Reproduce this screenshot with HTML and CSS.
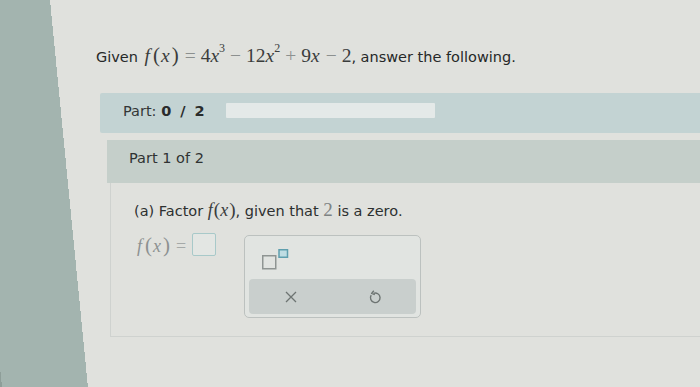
FILE: index.html
```html
<!DOCTYPE html>
<html lang="en">
<head>
<meta charset="utf-8">
<title>Factor f(x)</title>
<link rel="stylesheet" href="styles.css">
</head>
<body>
<main class="page">
  <p class="question">Given <span class="math"><i>f</i><span class="paren">(</span><i>x</i><span class="paren">)</span><span class="op">=</span>4<i>x</i><sup>3</sup><span class="op">−</span>12<i>x</i><sup>2</sup><span class="op">+</span>9<i>x</i><span class="op">−</span>2</span>, answer the following.</p>

  <div class="part-bar">
    <span class="part-label">Part: <b>0 <span class="slash">/</span> 2</b></span>
    <div class="progress"></div>
  </div>

  <section class="part">
    <div class="part-head">Part 1 of 2</div>
    <div class="part-body">
      <p class="prompt">(a) Factor <span class="math small"><i>f</i><span class="paren">(</span><i>x</i><span class="paren">)</span></span>, given that <span class="num">2</span> is a zero.</p>
      <div class="answer-row">
        <span class="math answer-lhs"><i>f</i><span class="paren">(</span><i>x</i><span class="paren">)</span><span class="op">=</span></span>
        <span class="answer-box"></span>
        <div class="keypad">
          <div class="keypad-top">
            <svg class="sup-icon" width="27" height="21" viewBox="0 0 27 21">
              <rect x="0.75" y="6.75" width="13" height="13" fill="none" stroke="#8f9593" stroke-width="1.5"/>
              <rect x="17" y="0.75" width="8.5" height="7.5" fill="#bfdde3" stroke="#5f9fae" stroke-width="1.5"/>
            </svg>
          </div>
          <div class="keypad-buttons">
            <button class="key" aria-label="clear">
              <svg width="12" height="12" viewBox="0 0 12 12"><path d="M1 1 L11 11 M11 1 L1 11" stroke="#6d7472" stroke-width="1.3" fill="none"/></svg>
            </button>
            <button class="key" aria-label="undo">
              <svg width="13" height="14" viewBox="0 0 13 14"><path d="M3.2 5.2 A4.8 4.8 0 1 0 5.5 3.3" stroke="#6d7472" stroke-width="1.4" fill="none"/><path d="M5.8 0.8 L3.6 3.4 L6.8 4.6" stroke="#6d7472" stroke-width="1.4" fill="none" stroke-linejoin="round"/></svg>
            </button>
          </div>
        </div>
      </div>
    </div>
  </section>
</main>
</body>
</html>
```

FILE: styles.css
```css
html, body {
  margin: 0;
  padding: 0;
}

body {
  width: 700px;
  height: 387px;
  overflow: hidden;
  font-family: "DejaVu Sans", Verdana, sans-serif;
  font-size: 14.5px;
  color: #2a2c2c;
  background:
    linear-gradient(84.4deg, #8e9e99 0 2px, transparent 2px),
    linear-gradient(84.4deg, #a3b4af 0 87.5px, #e0e1dd 87.5px);
}

.page {
  padding-left: 96px;
  padding-top: 43px;
}

.question {
  margin: 0;
  line-height: 24px;
  color: #262828;
}

.math {
  font-family: "Liberation Serif", "Times New Roman", serif;
  font-size: 19.5px;
  color: #3a3c3c;
}

.math i {
  font-style: italic;
  margin-right: 1px;
}

.math i:first-child {
  margin-left: 2px;
  margin-right: 2px;
}

.math .paren {
  font-size: 21px;
  margin: 0 1px;
}

.math sup {
  font-size: 12px;
  vertical-align: 10px;
  line-height: 0;
  margin-left: -1px;
}

.math .op {
  color: #8c908f;
  margin: 0 5px;
}

.math.small {
  font-size: 18px;
}

.math.small i:first-child {
  margin-left: 0;
  margin-right: 1px;
}

.math.small .paren {
  font-size: 19px;
  margin: 0;
}

.part-bar {
  margin: 24px 0 0 4px;
  height: 40px;
  box-sizing: border-box;
  padding: 0 0 5px 23px;
  background: #c3d3d3;
  display: flex;
  align-items: center;
  border-radius: 2px 0 0 2px;
}

.part-label {
  color: #333636;
}

.part-label b {
  color: #2a2c2c;
}

.slash {
  margin: 0 4px;
}

.progress {
  margin: 0 0 0 21px;
  width: 209px;
  height: 15px;
  background: #e4e9e8;
  border-radius: 1px;
}

.part {
  margin: 7px 0 0 11px;
}

.part-head {
  height: 43px;
  box-sizing: border-box;
  padding: 0 0 8px 22px;
  display: flex;
  align-items: center;
  background: #c5cfca;
  color: #303333;
}

.part-body {
  margin-left: 3px;
  border-left: 1px solid #cfd2cf;
  border-bottom: 1px solid #cfd2cf;
  padding: 16px 0 18px 23px;
}

.prompt {
  margin: 0;
  line-height: 22px;
  color: #2d3030;
}

.prompt .num {
  font-family: "Liberation Serif", "Times New Roman", serif;
  font-size: 19px;
  color: #7d8282;
}

.answer-row {
  display: flex;
  align-items: flex-start;
  margin-top: 11px;
}

.answer-lhs {
  color: #8d9191;
  line-height: 24px;
  font-size: 18px;
  margin-left: 1px;
}

.answer-lhs .op {
  color: #a5a9a8;
  margin: 0 6px 0 5px;
}

.answer-box {
  width: 22px;
  height: 21px;
  border: 1.5px solid #a8c9c9;
  border-radius: 2px;
  background: #e3e6e3;
}

.keypad {
  margin: 2px 0 0 28px;
  width: 177px;
  height: 83px;
  box-sizing: border-box;
  border: 1.5px solid #bcc1bf;
  border-radius: 5px;
  padding: 0 4px 3px;
  display: flex;
  flex-direction: column;
  background: #e1e4e1;
}

.keypad-top {
  height: 43px;
  padding: 13px 0 0 13px;
  box-sizing: border-box;
}

.sup-icon {
  display: block;
}

.keypad-buttons {
  flex: 1;
  display: grid;
  grid-template-columns: 1fr 1fr;
  background: #c9cfcd;
  border-radius: 4px;
}

.key {
  border: 0;
  background: transparent;
  padding: 0;
  display: flex;
  align-items: center;
  justify-content: center;
}
```
